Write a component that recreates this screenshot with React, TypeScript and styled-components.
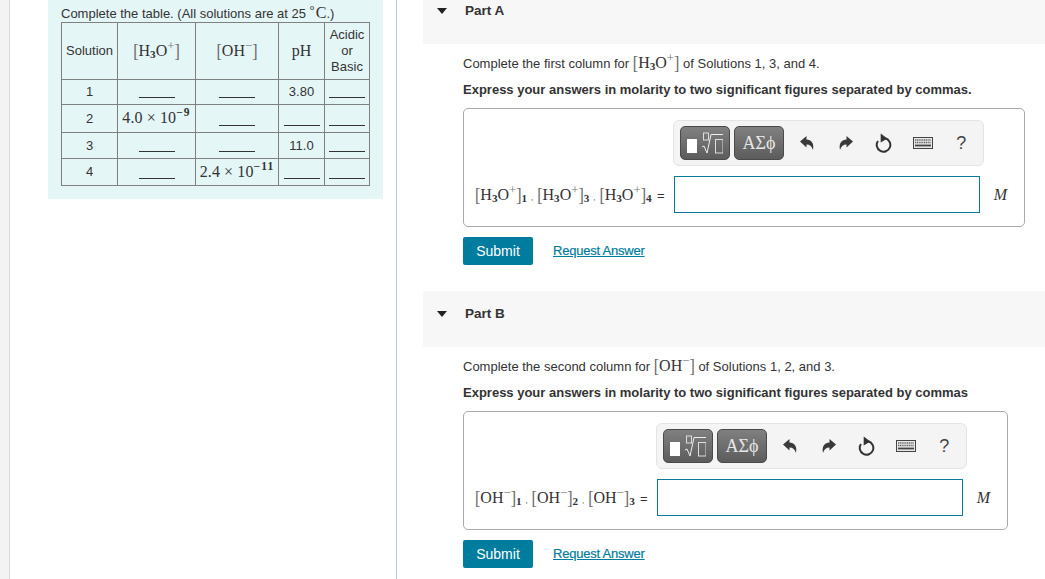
import styled, { createGlobalStyle } from 'styled-components';

const GlobalStyle = createGlobalStyle`
  html, body {
    margin: 0;
    height: 100%;
    overflow: hidden;
    background: #fff;
    font-family: 'Liberation Sans', Arial, sans-serif;
    color: #333;
  }
`;

const Page = styled.div`
  display: flex;
  height: 579px;
  overflow: hidden;
`;

const Gutter = styled.div`
  width: 9px;
  flex: none;
  background: #f3f3f3;
  border-right: 1px solid #d8d8d8;
`;

const LeftColumn = styled.aside`
  width: 387px;
  flex: none;
  box-sizing: border-box;
  padding-left: 38px;
  border-right: 1px solid #b9cde0;
`;

const TablePanel = styled.div`
  width: 335px;
  box-sizing: border-box;
  padding: 0 13px 13px;
  background: #e5f6f7;
`;

const Caption = styled.div`
  height: 22px;
  padding-top: 4px;
  box-sizing: border-box;
  font-size: 13px;
  line-height: 17px;
  white-space: nowrap;
`;

const DataTable = styled.table`
  border-collapse: collapse;
  table-layout: fixed;
  width: 309px;
  font-size: 13px;
`;

const Row = styled.tr<{ $height: number }>`
  height: ${(p) => p.$height}px;
`;

const Cell = styled.td<{ $blank?: boolean }>`
  padding: ${(p) => (p.$blank ? '0 0 6px' : '0')};
  border: 1px solid #808080;
  text-align: center;
  vertical-align: ${(p) => (p.$blank ? 'bottom' : 'middle')};
  line-height: 16px;
  white-space: nowrap;
`;

const Blank = styled.div`
  width: 36px;
  height: 1px;
  margin: 0 auto;
  background: #333;
`;

const Math = styled.span`
  font-family: 'Liberation Serif', 'Times New Roman', serif;
  font-size: 16px;
  color: #333;
  white-space: nowrap;
`;

const ScientificValue = styled(Math)`
  letter-spacing: 0.1px;
`;

const Bracket = styled.span`
  display: inline-block;
  color: #666;
  line-height: 1;
  transform: scaleY(1.12);
`;

const Sub = styled.span`
  font-size: 0.7em;
  vertical-align: -0.2em;
  line-height: 0;
  font-weight: 700;
`;

const Sup = styled.span`
  font-size: 0.8em;
  vertical-align: 0.5em;
  line-height: 0;
  color: #777;
`;

const Power = styled(Sup)`
  font-size: 0.72em;
  color: #333;
  font-weight: 700;
  letter-spacing: 1.1px;
  vertical-align: 0.6em;
`;

const Degree = styled.span`
  font-size: 0.8em;
  vertical-align: 0.3em;
  line-height: 0;
  margin-right: 1px;
`;

const Right = styled.main`
  flex: 1;
  min-width: 0;
  margin-top: -12px;
  padding-left: 26px;
`;

const Part = styled.section`
  margin-bottom: 26px;
`;

const PartHeader = styled.header`
  display: flex;
  align-items: flex-start;
  gap: 18px;
  height: 56px;
  box-sizing: border-box;
  padding: 14px 0 0 14px;
  background: #f7f7f7;
  font-size: 13.5px;
  font-weight: 700;
  line-height: 18px;
`;

const Caret = styled.span`
  width: 0;
  height: 0;
  margin-top: 6px;
  border-left: 5px solid transparent;
  border-right: 5px solid transparent;
  border-top: 6px solid #222;
`;

const PartBody = styled.div`
  padding: 9px 0 0 40px;
`;

const Intro = styled.p`
  margin: 0;
  height: 19px;
  font-size: 13px;
  line-height: 19px;
  white-space: nowrap;
`;

const Instruction = styled.p`
  margin: 9px 0 0;
  height: 18px;
  font-size: 13px;
  font-weight: 700;
  line-height: 18px;
  white-space: nowrap;
`;

const AnswerBox = styled.div<{ $width: number }>`
  display: flex;
  flex-direction: column;
  width: ${(p) => p.$width}px;
  height: 119px;
  box-sizing: border-box;
  margin-top: 9px;
  padding-top: 11px;
  border: 1px solid #aaa;
  border-radius: 5px;
`;

const Toolbar = styled.div`
  display: flex;
  align-items: center;
  align-self: flex-end;
  box-sizing: border-box;
  width: 311px;
  height: 46px;
  margin-right: 40px;
  padding: 0 2px 0 6px;
  background: #f4f4f4;
  border: 1px solid #e4e4e4;
  border-radius: 6px;
`;

const TemplateButton = styled.button`
  display: flex;
  align-items: center;
  justify-content: center;
  width: 50px;
  height: 34px;
  margin-right: 4px;
  padding: 0;
  border: 1px solid #4a4a4a;
  border-radius: 5px;
  background: linear-gradient(#808080, #5c5c5c);
  color: #e6e6e6;
  font-family: 'Liberation Serif', serif;
  font-size: 18px;
`;

const ToolSlot = styled.span`
  display: flex;
  align-items: center;
  justify-content: center;
  width: 38.5px;
  height: 34px;
  color: #444;
  font-size: 18px;
`;

const AnswerRow = styled.div`
  display: flex;
  align-items: center;
  margin-top: 10px;
  padding-left: 11px;
`;

const AnswerLabel = styled.label`
  flex: 1;
  min-width: 0;
  font-size: 12px;
  white-space: nowrap;
`;

const Comma = styled.span`
  display: inline-block;
  width: 10px;
  text-align: center;
  font-size: 8px;
`;

const Equals = styled.span`
  margin-left: 2px;
  font-size: 13px;
`;

const AnswerInput = styled.input`
  width: 306px;
  height: 37px;
  box-sizing: border-box;
  border: 1px solid #0b7a9a;
  border-radius: 0;
  outline: none;
`;

const Unit = styled.span`
  width: 44px;
  box-sizing: border-box;
  padding-right: 3px;
  text-align: center;
  font-family: 'Liberation Serif', serif;
  font-size: 16px;
  font-style: italic;
  color: #333;
`;

const Actions = styled.div`
  display: flex;
  align-items: center;
  gap: 20px;
  margin-top: 10px;
`;

const SubmitButton = styled.button`
  width: 70px;
  height: 28px;
  padding: 0;
  border: none;
  border-radius: 2px;
  background: #007c9e;
  color: #fff;
  font-family: 'Liberation Sans', Arial, sans-serif;
  font-size: 14px;
`;

const RequestLink = styled.a`
  margin-top: -2px;
  color: #007c9e;
  font-size: 13px;
  letter-spacing: -0.22px;
  -webkit-text-stroke: 0.2px #007c9e;
  text-decoration: underline;
`;

const UndoIcon = ({ flip }: { flip?: boolean }) => (
  <svg width="16" height="16" viewBox="0 0 16 16" style={flip ? { transform: 'scaleX(-1)' } : undefined}>
    <path d="M1 6.5 L7.5 1 V4.5 C12 4.5 15.5 8 14 15 C13 11.5 11 9.5 7.5 9.5 V12.5 Z" fill="#3a3a3a" />
  </svg>
);

const ResetIcon = () => (
  <svg width="18" height="20" viewBox="0 0 18 20">
    <path d="M10 5.3 A6.8 6.8 0 1 1 3 8" fill="none" stroke="#333" strokeWidth="2" />
    <path d="M5.7 0.4 L12.3 5.4 L5.7 9.4 Z" fill="#333" />
  </svg>
);

const KeyboardIcon = () => (
  <svg width="20" height="12" viewBox="0 0 20 12">
    <rect x="0.5" y="0.5" width="19" height="11" fill="#e8e8e8" stroke="#444" />
    <path d="M2 3 H18 M2 5.5 H18" stroke="#666" strokeWidth="1.5" strokeDasharray="1.2 0.6" />
    <path d="M2 8.5 H18" stroke="#444" strokeWidth="1.8" />
  </svg>
);

const TemplatesIcon = () => (
  <svg width="36" height="22" viewBox="0 0 36 22">
    <rect x="0" y="7" width="10" height="14" fill="#fff" />
    <rect x="16.5" y="1" width="5" height="7" fill="none" stroke="#ddd" />
    <path d="M15 15 L17 14 L20 21 L24 2.5 H36" fill="none" stroke="#eee" />
    <rect x="28.5" y="7.5" width="7.5" height="13.5" fill="none" stroke="#ddd" />
  </svg>
);

const H3O = () => (
  <>
    <Bracket>[</Bracket>H<Sub>3</Sub>O<Sup>+</Sup>
    <Bracket>]</Bracket>
  </>
);

const OH = () => (
  <>
    <Bracket>[</Bracket>OH<Sup>−</Sup>
    <Bracket>]</Bracket>
  </>
);

const tableRows = [
  { height: 25, id: '1', h3o: null, oh: null, ph: '3.80' },
  { height: 28, id: '2', h3o: ['4.0 × 10', '−9'], oh: null, ph: null },
  { height: 26, id: '3', h3o: null, oh: null, ph: '11.0' },
  { height: 27, id: '4', h3o: null, oh: ['2.4 × 10', '−11'], ph: null },
];

const Scientific = ({ value }: { value: string[] }) => (
  <ScientificValue>
    {value[0]}
    <Power>{value[1]}</Power>
  </ScientificValue>
);

const Tools = () => (
  <Toolbar>
    <TemplateButton aria-label="Templates">
      <TemplatesIcon />
    </TemplateButton>
    <TemplateButton>ΑΣϕ</TemplateButton>
    <ToolSlot>
      <UndoIcon />
    </ToolSlot>
    <ToolSlot>
      <UndoIcon flip />
    </ToolSlot>
    <ToolSlot>
      <ResetIcon />
    </ToolSlot>
    <ToolSlot>
      <KeyboardIcon />
    </ToolSlot>
    <ToolSlot>?</ToolSlot>
  </Toolbar>
);

type AnswerPartProps = {
  name: string;
  width: number;
  intro: React.ReactNode;
  instruction: string;
  label: React.ReactNode;
};

const AnswerPart = ({ name, width, intro, instruction, label }: AnswerPartProps) => (
  <Part>
    <PartHeader>
      <Caret />
      {name}
    </PartHeader>
    <PartBody>
      <Intro>{intro}</Intro>
      <Instruction>{instruction}</Instruction>
      <AnswerBox $width={width}>
        <Tools />
        <AnswerRow>
          <AnswerLabel>{label}</AnswerLabel>
          <AnswerInput />
          <Unit>M</Unit>
        </AnswerRow>
      </AnswerBox>
      <Actions>
        <SubmitButton>Submit</SubmitButton>
        <RequestLink href="#">Request Answer</RequestLink>
      </Actions>
    </PartBody>
  </Part>
);

export default function App() {
  return (
    <Page>
      <GlobalStyle />
      <Gutter />
      <LeftColumn>
        <TablePanel>
          <Caption>
            Complete the table. (All solutions are at 25{' '}
            <Math>
              <Degree>°</Degree>C
            </Math>
            .)
          </Caption>
          <DataTable>
            <colgroup>
              <col width="56" />
              <col width="78" />
              <col width="83" />
              <col width="46" />
              <col width="45" />
            </colgroup>
            <tbody>
              <Row $height={57}>
                <Cell>Solution</Cell>
                <Cell>
                  <Math>
                    <H3O />
                  </Math>
                </Cell>
                <Cell>
                  <Math>
                    <OH />
                  </Math>
                </Cell>
                <Cell>
                  <Math>pH</Math>
                </Cell>
                <Cell>
                  Acidic
                  <br />
                  or
                  <br />
                  Basic
                </Cell>
              </Row>
              {tableRows.map((row) => (
                <Row key={row.id} $height={row.height}>
                  <Cell>{row.id}</Cell>
                  <Cell $blank={!row.h3o}>{row.h3o ? <Scientific value={row.h3o} /> : <Blank />}</Cell>
                  <Cell $blank={!row.oh}>{row.oh ? <Scientific value={row.oh} /> : <Blank />}</Cell>
                  <Cell $blank={!row.ph}>{row.ph ?? <Blank />}</Cell>
                  <Cell $blank>
                    <Blank />
                  </Cell>
                </Row>
              ))}
            </tbody>
          </DataTable>
        </TablePanel>
      </LeftColumn>
      <Right>
        <AnswerPart
          name="Part A"
          width={562}
          intro={
            <>
              Complete the first column for{' '}
              <Math>
                <H3O />
              </Math>{' '}
              of Solutions 1, 3, and 4.
            </>
          }
          instruction="Express your answers in molarity to two significant figures separated by commas."
          label={
            <>
              <Math>
                <H3O />
                <Sub>1</Sub>
              </Math>
              <Comma>,</Comma>
              <Math>
                <H3O />
                <Sub>3</Sub>
              </Math>
              <Comma>,</Comma>
              <Math>
                <H3O />
                <Sub>4</Sub>
              </Math>{' '}
              <Equals>=</Equals>
            </>
          }
        />
        <AnswerPart
          name="Part B"
          width={545}
          intro={
            <>
              Complete the second column for{' '}
              <Math>
                <OH />
              </Math>{' '}
              of Solutions 1, 2, and 3.
            </>
          }
          instruction="Express your answers in molarity to two significant figures separated by commas"
          label={
            <>
              <Math>
                <OH />
                <Sub>1</Sub>
              </Math>
              <Comma>,</Comma>
              <Math>
                <OH />
                <Sub>2</Sub>
              </Math>
              <Comma>,</Comma>
              <Math>
                <OH />
                <Sub>3</Sub>
              </Math>{' '}
              <Equals>=</Equals>
            </>
          }
        />
      </Right>
    </Page>
  );
}
